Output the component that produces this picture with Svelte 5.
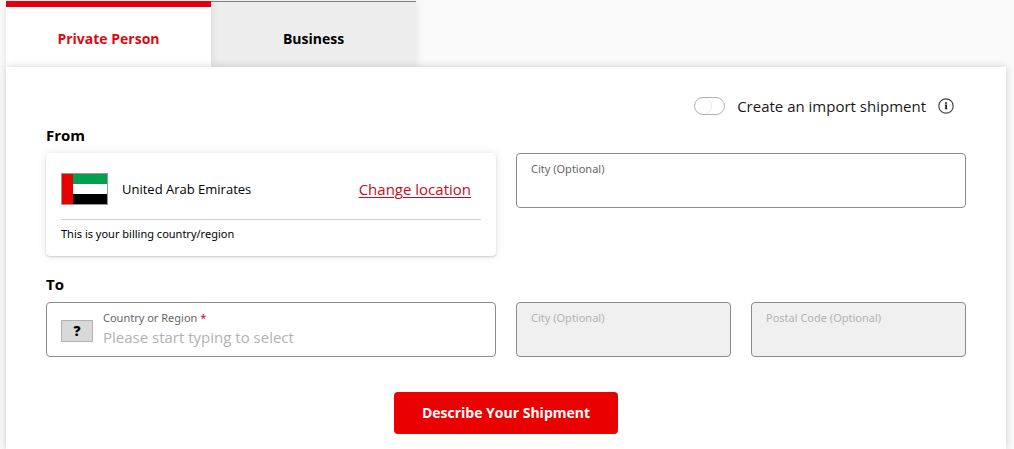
<script lang="ts">
type CustomerType = 'private' | 'business'

const tabs: { id: CustomerType, label: string }[] = [
    { id: 'private', label: 'Private Person' },
    { id: 'business', label: 'Business' }
]

let selected = $state<CustomerType>('private')
let isImport = $state(false)
let fromCity = $state('')
let country = $state('')
let toCity = $state('')
let postalCode = $state('')
</script>

<main>
    <div class="tabs" role="tablist">
        {#each tabs as tab}
            <button
                type="button"
                role="tab"
                class="tab"
                class:active={selected === tab.id}
                aria-selected={selected === tab.id}
                onclick={() => (selected = tab.id)}
            >
                {tab.label}
            </button>
        {/each}
    </div>

    <form class="panel" onsubmit={(e) => e.preventDefault()}>
        <div class="import-row">
            <label class="switch">
                <input type="checkbox" role="switch" bind:checked={isImport} />
                Create an import shipment
            </label>
            <button type="button" class="info" aria-label="More information">
                <svg viewBox="0 0 16 16" width="16" height="16">
                    <circle cx="8" cy="8" r="7.2" fill="none" stroke="#444" stroke-width="1.2" />
                    <circle cx="8" cy="5" r="1" fill="#222" />
                    <path d="M6.8 6.6H9V10.4H9.4V11.2H6.8V10.4H7.2V7.4H6.8Z" fill="#222" />
                </svg>
            </button>
        </div>

        <h2>From</h2>
        <div class="row">
            <div class="location">
                <div class="location-main">
                    <svg class="flag" viewBox="0 0 47 32" width="47" height="32">
                        <rect width="47" height="32" fill="#999" />
                        <rect x="1" y="1" width="45" height="30" fill="#fff" />
                        <rect x="12" y="1" width="34" height="10" fill="#00a050" />
                        <rect x="12" y="21" width="34" height="10" fill="#000" />
                        <rect x="1" y="1" width="11" height="30" fill="#e60000" />
                    </svg>
                    <span class="country">United Arab Emirates</span>
                    <a href="#location">Change location</a>
                </div>
                <p>This is your billing country/region</p>
            </div>
            <div class="field">
                <label for="from-city">City (Optional)</label>
                <input id="from-city" type="text" bind:value={fromCity} />
            </div>
        </div>

        <h2 class="to">To</h2>
        <div class="row">
            <div class="field with-flag">
                <span class="unknown" aria-hidden="true">?</span>
                <label for="to-country">Country or Region <span class="required">*</span></label>
                <input id="to-country" type="text" placeholder="Please start typing to select" required bind:value={country} />
            </div>
            <div class="row">
                <div class="field disabled">
                    <label for="to-city">City (Optional)</label>
                    <input id="to-city" type="text" disabled bind:value={toCity} />
                </div>
                <div class="field disabled">
                    <label for="to-postal">Postal Code (Optional)</label>
                    <input id="to-postal" type="text" disabled bind:value={postalCode} />
                </div>
            </div>
        </div>

        <button type="submit" class="submit">Describe Your Shipment</button>
    </form>
</main>

<style>
    :global(body) {
        background: #fafafa;
        overflow-x: hidden;
    }

    main {
        padding: 1px 8px 0 6px;
        font-family: "Open Sans", "Noto Sans", sans-serif;
        font-size: 15px;
        color: #191919;
    }

    button,
    input {
        font-family: inherit;
    }

    .tabs {
        display: flex;
    }

    .tab {
        flex: 0 1 205px;
        height: 66px;
        padding: 8px 0 0;
        border: 0;
        border-top: 1px solid #808080;
        background: #ededed;
        box-shadow: 0 0 8px rgba(0, 0, 0, 0.1);
        color: #000;
        font-size: 14px;
        font-weight: 700;
        line-height: 20px;
        cursor: pointer;
    }

    .tab.active {
        position: relative;
        padding-top: 4px;
        border-top: 6px solid #e1000f;
        background: #fff;
        color: #dc0a0f;
    }

    .panel {
        position: relative;
        display: flex;
        flex-direction: column;
        padding: 27px 40px 15px;
        background: #fff;
        box-shadow: 0 0 8px rgba(0, 0, 0, 0.18);
    }

    .import-row {
        display: flex;
        justify-content: flex-end;
        align-items: center;
        gap: 12px;
        padding-right: 12px;
    }

    .switch {
        display: flex;
        align-items: center;
        gap: 12px;
        line-height: 24px;
        cursor: pointer;
    }

    .switch input {
        appearance: none;
        width: 31px;
        height: 18px;
        margin: 0;
        border: 1px solid #b2b2b2;
        border-radius: 9px;
        background: #fff;
        cursor: pointer;
    }

    .switch input::before {
        content: "";
        display: block;
        width: 16px;
        height: 16px;
        border-radius: 50%;
        box-shadow: 1px 0 1px rgba(0, 0, 0, 0.1);
    }

    .switch input:checked {
        background: #76bd22;
    }

    .switch input:checked::before {
        margin-left: 13px;
        background: #fff;
    }

    .info {
        display: flex;
        padding: 0;
        border: 0;
        background: none;
        cursor: pointer;
    }

    h2 {
        margin: 5px 0 6px;
        color: #000;
        font-size: 15px;
        font-weight: 700;
        line-height: 24px;
    }

    h2.to {
        margin-top: 16px;
    }

    .row {
        display: grid;
        grid-template-columns: 1fr 1fr;
        align-items: start;
        gap: 20px;
    }

    .location {
        padding: 20px 15px 13px;
        border-radius: 4px;
        box-shadow: 0 1px 2px rgba(0, 0, 0, 0.16), 0 0 10px rgba(0, 0, 0, 0.1);
        color: #000;
    }

    .location-main {
        display: flex;
        align-items: center;
        padding: 0 10px 14px 0;
        border-bottom: 1px solid #ccc;
    }

    .country {
        flex: 1;
        margin-left: 14px;
        font-size: 13px;
    }

    a {
        color: #c80a1e;
        text-underline-offset: 2px;
    }

    .location p {
        margin: 5px 0 0;
        font-family: "Noto Sans", sans-serif;
        font-size: 11px;
        line-height: 18px;
    }

    .field {
        display: grid;
        align-content: start;
        box-sizing: border-box;
        min-height: 55px;
        padding: 7px 14px;
        border: 1px solid #8c8c8c;
        border-radius: 4px;
        background: #fff;
    }

    .field label {
        color: #666;
        font-family: "Noto Sans", sans-serif;
        font-size: 11px;
        line-height: 16px;
    }

    .field input {
        min-width: 0;
        height: 22px;
        padding: 0;
        border: 0;
        outline: 0;
        background: none;
        color: #191919;
        font-size: 15px;
    }

    .field input::placeholder {
        color: #b2b2b2;
        opacity: 1;
    }

    .with-flag {
        grid-template-columns: 32px 1fr;
        column-gap: 10px;
    }

    .unknown {
        grid-row: 1 / 3;
        align-self: end;
        box-sizing: border-box;
        height: 22px;
        margin-bottom: 6px;
        border: 1px solid #b2b2b2;
        background: #d9d9d9;
        color: #000;
        font-size: 14px;
        font-weight: 800;
        line-height: 20px;
        text-align: center;
    }

    .required {
        color: #c80a1e;
    }

    .field.disabled {
        background: #f0f0f0;
    }

    .field.disabled label {
        color: #b2b2b2;
    }

    .submit {
        align-self: center;
        height: 42px;
        margin-top: 35px;
        padding: 0 28px 2px;
        border: 0;
        border-radius: 4px;
        background: #eb0000;
        color: #fff;
        font-size: 14px;
        font-weight: 700;
        cursor: pointer;
    }
</style>
